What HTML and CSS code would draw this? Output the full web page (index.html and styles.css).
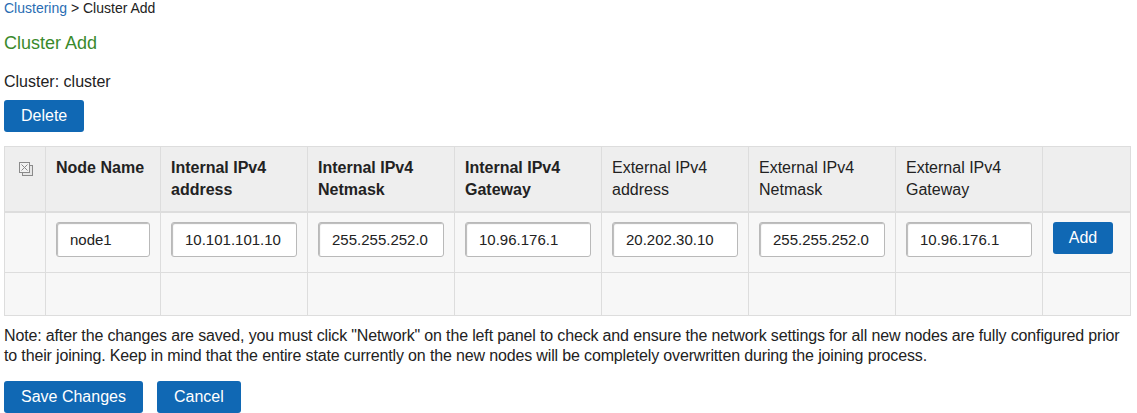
FILE: index.html
```html
<!DOCTYPE html>
<html>
<head>
<meta charset="utf-8">
<link rel="stylesheet" href="styles.css">
</head>
<body>
<div class="page">
  <div class="crumbs"><a class="crumb-link" href="#">Clustering</a> &gt; Cluster Add</div>
  <h1 class="title">Cluster Add</h1>
  <div class="cluster-name">Cluster: cluster</div>
  <button class="btn btn-delete">Delete</button>
  <table class="grid">
    <colgroup>
      <col class="c-check">
      <col class="c-name">
      <col class="c-ip"><col class="c-ip"><col class="c-ip">
      <col class="c-ip"><col class="c-ip"><col class="c-ip">
      <col class="c-act">
    </colgroup>
    <thead>
      <tr>
        <th class="check-cell">
          <svg class="sel-icon" width="16" height="16" viewBox="0 0 16 16">
            <rect x="4.5" y="4.5" width="10" height="10" fill="#e6e6e6" stroke="#8a8a8a"/>
            <rect x="1.5" y="1.5" width="10" height="10" fill="#f2f2f2" stroke="#8a8a8a"/>
            <path d="M3.5 3.5 L9.5 9.5 M9.5 3.5 L3.5 9.5" stroke="#8a8a8a" stroke-width="1"/>
          </svg>
        </th>
        <th class="bold">Node Name</th>
        <th class="bold">Internal IPv4 address</th>
        <th class="bold">Internal IPv4 Netmask</th>
        <th class="bold">Internal IPv4 Gateway</th>
        <th>External IPv4 address</th>
        <th>External IPv4 Netmask</th>
        <th>External IPv4 Gateway</th>
        <th></th>
      </tr>
    </thead>
    <tbody>
      <tr class="entry">
        <td></td>
        <td><input class="field" value="node1"></td>
        <td><input class="field" value="10.101.101.10"></td>
        <td><input class="field" value="255.255.252.0"></td>
        <td><input class="field" value="10.96.176.1"></td>
        <td><input class="field" value="20.202.30.10"></td>
        <td><input class="field" value="255.255.252.0"></td>
        <td><input class="field" value="10.96.176.1"></td>
        <td><button class="btn btn-add">Add</button></td>
      </tr>
      <tr class="empty">
        <td></td><td></td><td></td><td></td><td></td><td></td><td></td><td></td><td></td>
      </tr>
    </tbody>
  </table>
  <p class="note">Note: after the changes are saved, you must click "Network" on the left panel to check and ensure the network settings for all new nodes are fully configured prior to their joining. Keep in mind that the entire state currently on the new nodes will be completely overwritten during the joining process.</p>
  <div class="actions">
    <button class="btn">Save Changes</button>
    <button class="btn">Cancel</button>
  </div>
</div>
</body>
</html>
```

FILE: styles.css
```css
html, body {
  margin: 0;
  padding: 0;
  background: #ffffff;
}
body {
  font-family: "Liberation Sans", Arial, sans-serif;
  color: #222222;
  font-size: 16px;
}
.page {
  padding: 0 4px;
}
.crumbs {
  font-size: 14px;
  line-height: 16px;
  color: #222;
}
.crumb-link {
  color: #2a6db3;
  text-decoration: none;
}
.title {
  margin: 17px 0 0;
  font-size: 18px;
  line-height: 20px;
  font-weight: normal;
  color: #3a8a2c;
}
.cluster-name {
  margin-top: 19px;
  font-size: 16px;
  line-height: 20px;
}
.btn {
  display: inline-block;
  height: 32px;
  padding: 0 17px;
  border: none;
  border-radius: 3px;
  background: #1068b4;
  color: #ffffff;
  font-family: "Liberation Sans", Arial, sans-serif;
  font-size: 16px;
  line-height: 32px;
  cursor: pointer;
}
.btn-delete {
  margin-top: 8px;
}
.grid {
  margin-top: 14px;
  border-collapse: collapse;
  table-layout: fixed;
  width: 1126px;
}
.c-check { width: 41px; }
.c-name { width: 115px; }
.c-ip { width: 147px; }
.c-act { width: 88px; }
.grid th, .grid td {
  border: 1px solid #dddddd;
  text-align: left;
  vertical-align: top;
}
.grid th {
  background: #eeeeee;
  padding: 10px 10px 10px;
  font-size: 16px;
  line-height: 22px;
  font-weight: normal;
  color: #222;
  height: 44px;
  border-bottom: 2px solid #dddddd;
}
.grid th.bold {
  font-weight: bold;
}
.grid th.check-cell {
  padding: 14px 0 0 13px;
}
.sel-icon {
  display: block;
}
.grid td {
  background: #f7f7f7;
}
.entry td {
  padding: 9px 10px 15px;
  height: 35px;
}
.empty td {
  height: 42px;
  padding: 0;
}
.field {
  display: block;
  box-sizing: border-box;
  width: 100%;
  height: 35px;
  padding: 0 13px;
  border: 1px solid #b9b9b9;
  border-radius: 3px;
  box-shadow: inset 1px 1px 1px rgba(0, 0, 0, 0.28);
  background: #ffffff;
  font-family: "Liberation Sans", Arial, sans-serif;
  font-size: 15px;
  color: #222;
}
.btn-add {
  width: 60px;
  padding: 0;
  text-align: center;
}
.note {
  margin: 10px 0 0;
  font-size: 16px;
  line-height: 20px;
  letter-spacing: -0.15px;
}
.actions {
  margin-top: 15px;
  display: flex;
  gap: 14px;
}
```
